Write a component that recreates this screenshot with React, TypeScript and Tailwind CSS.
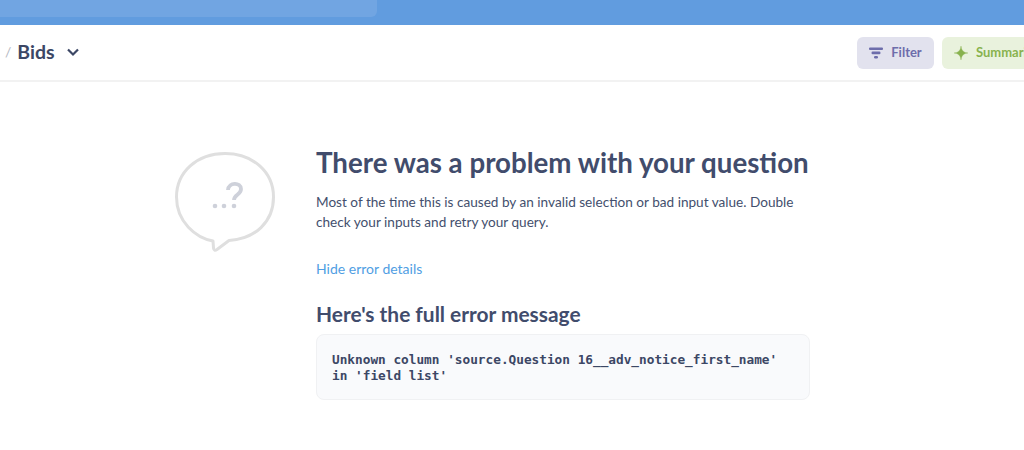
export default function App() {
  return (
    <div className="w-[1024px] h-[450px] overflow-hidden bg-white font-['Lato',sans-serif] text-[#3f4a68]">
      <div className="h-[25px] bg-[#619cdf]">
        <div className="w-[377px] h-[17px] bg-[#71a5e2] rounded-br-[6px]" />
      </div>
      <header className="h-[57px] border-b-2 border-[#f2f2f2] flex items-center justify-between">
        <div className="flex items-center mb-[2px]">
          <span className="ml-[5px] text-[14px] text-[#b4b8c2] mr-[6px]">/</span>
          <span className="text-[19.5px] font-bold text-[#3c4765] leading-none">Bids</span>
          <svg className="ml-[11px]" width="14" height="10" viewBox="0 0 14 10" fill="none">
            <path d="M2 2.5 L7 7.5 L12 2.5" stroke="#3c4765" strokeWidth="2.2" />
          </svg>
        </div>
        <div className="flex items-center gap-[8px] w-[167px] shrink-0 overflow-hidden">
          <button className="w-[77px] h-[32px] shrink-0 rounded-[6px] bg-[#e2e2ee] flex items-center justify-center gap-[8px] text-[13px] font-bold text-[#6d6dab]">
            <svg width="14" height="12" viewBox="0 0 14 12" fill="#6d6dab">
              <path d="M1 0.5 H13 Q14 0.5 14 1.5 V2 Q14 3 13 3 H1 Q0 3 0 2 V1.5 Q0 0.5 1 0.5 Z" />
              <rect x="2.5" y="4.6" width="9" height="2.6" rx="1.2" />
              <rect x="5" y="9" width="4" height="2.4" rx="1.2" />
            </svg>
            Filter
          </button>
          <button className="w-[110px] h-[32px] shrink-0 rounded-[6px] bg-[#e9f2dd] flex items-center pl-[12px] gap-[8px] text-[13px] font-bold text-[#88b24e]">
            <svg width="14" height="14" viewBox="0 0 14 14" fill="#88b24e">
              <path d="M7 0 Q7.4 6.6 14 7 Q7.4 7.4 7 14 Q6.6 7.4 0 7 Q6.6 6.6 7 0 Z" stroke="#88b24e" strokeWidth="0.3" />
            </svg>
            Summarize
          </button>
        </div>
      </header>
      <main className="flex pl-[175px] pt-[68px]">
        <svg className="w-[100px] h-[102px] mt-[2px] shrink-0" viewBox="0 0 100 102" fill="none">
          <path
            d="M50 1.5 C22 1.5 1.5 20 1.5 45 C1.5 70 21 86 38 89 L38.5 96 Q39 99.5 42 97.5 L54 88.5 C80 87 98.5 70 98.5 45 C98.5 20 78 1.5 50 1.5 Z"
            stroke="#dfdfdf"
            strokeWidth="3"
            strokeLinejoin="round"
          />
          <circle cx="40" cy="54" r="2.3" fill="#ced1da" />
          <circle cx="49" cy="54" r="2.3" fill="#ced1da" />
          <circle cx="59" cy="54" r="2.3" fill="#ced1da" />
          <path d="M53 38 C53.5 30 66 30 66 37 C66 43 59 42.5 59 48" stroke="#ced1da" strokeWidth="3.8" />
        </svg>
        <div className="ml-[41px] w-[494px]">
          <h1 className="-mt-[4px] text-[27.7px] font-bold leading-[34px] text-[#414c6c] whitespace-nowrap">There was a problem with your question</h1>
          <p className="mt-[13px] w-[490px] text-[13.6px] leading-[19.5px] text-[#434f6d]">
            Most of the time this is caused by an invalid selection or bad input value. Double check your inputs and retry your query.
          </p>
          <div className="mt-[27px] text-[14px] leading-[20px] text-[#509ee3]">Hide error details</div>
          <h2 className="mt-[22px] text-[20.9px] font-bold leading-[26px] text-[#414c6c] whitespace-nowrap">Here's the full error message</h2>
          <pre className="mt-[7px] h-[66px] rounded-[8px] border border-[#f0f1f3] bg-[#f9fafc] pl-[15px] pr-[16px] pt-[17px] font-['DejaVu_Sans_Mono',monospace] text-[12.75px] font-bold leading-[16px] text-[#3c4765]">
            {"Unknown column 'source.Question 16__adv_notice_first_name'\nin 'field list'"}
          </pre>
        </div>
      </main>
    </div>
  );
}
